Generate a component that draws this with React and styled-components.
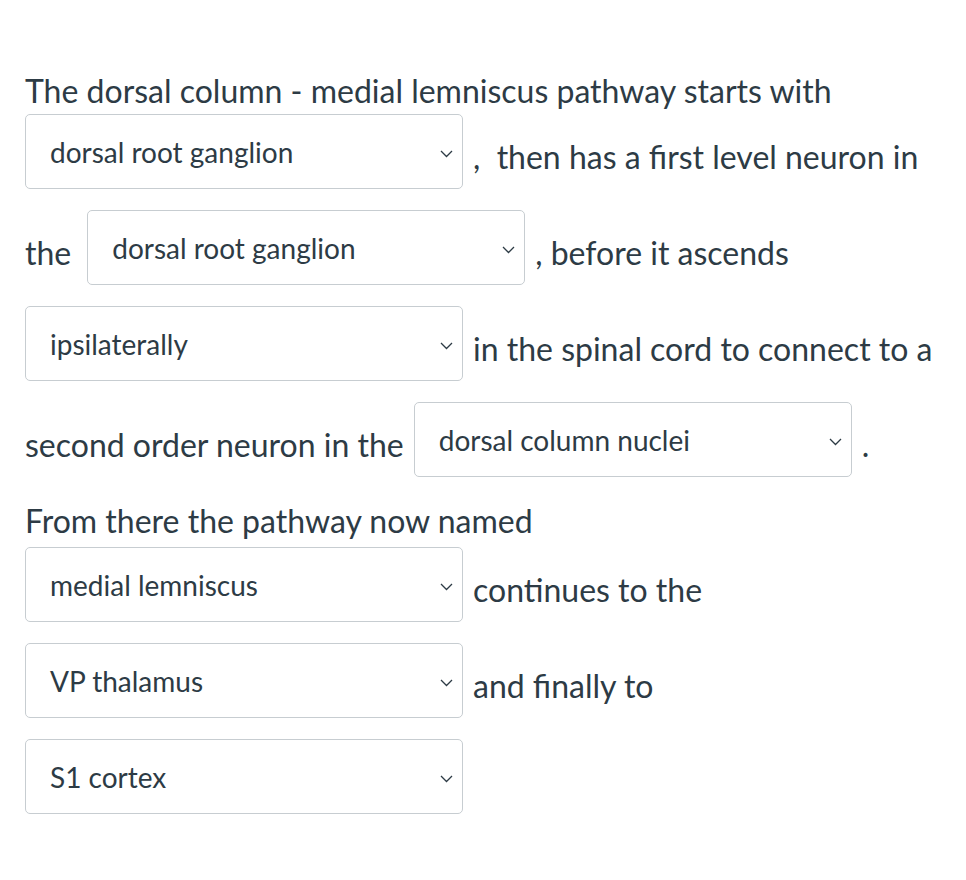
import React from 'react'
import styled, { createGlobalStyle } from 'styled-components'

const Global = createGlobalStyle`
  html, body {
    margin: 0;
    padding: 0;
    background: #fff;
  }
`

const Page = styled.div`
  padding: 73px 0 40px 25px;
  font-family: Lato, "Noto Sans", sans-serif;
  color: #2d3b45;
`

const Line = styled.div`
  display: flex;
  align-items: flex-end;
  gap: 10px;
  margin-top: ${p => p.$mt || 0}px;
`

const Words = styled.span`
  font-size: 32px;
  line-height: 36px;
  white-space: nowrap;
  padding-bottom: ${p => (p.$lift ? 14 : 0)}px;
  margin-right: ${p => (p.$before ? 6 : 0)}px;
`

const Box = styled.div`
  box-sizing: border-box;
  width: 438px;
  height: 75px;
  flex: none;
  display: flex;
  align-items: center;
  justify-content: space-between;
  padding: 0 9px 0 24px;
  border: 1px solid #c7cdd1;
  border-radius: 5px;
  background: #fff;
  font-size: 28px;
`

const Chevron = styled.svg`
  width: 13px;
  height: 8px;
  margin-top: 4px;
`

function Select({ value }) {
  return (
    <Box>
      <span>{value}</span>
      <Chevron viewBox="0 0 13 8" fill="none">
        <path d="M1 1l5.5 5.5 5.5-5.5" stroke="#2d3b45" strokeWidth="1.3" />
      </Chevron>
    </Box>
  )
}

export default function App() {
  return (
    <Page>
      <Global />
      <Line>
        <Words>The dorsal column - medial lemniscus pathway starts with</Words>
      </Line>
      <Line $mt={5}>
        <Select value="dorsal root ganglion" />
        <Words $lift>, &nbsp;then has a first level neuron in</Words>
      </Line>
      <Line $mt={21}>
        <Words $lift $before>the</Words>
        <Select value="dorsal root ganglion" />
        <Words $lift>, before it ascends</Words>
      </Line>
      <Line $mt={21}>
        <Select value="ipsilaterally" />
        <Words $lift>in the spinal cord to connect to a</Words>
      </Line>
      <Line $mt={21}>
        <Words $lift>second order neuron in the</Words>
        <Select value="dorsal column nuclei" />
        <Words $lift>.</Words>
      </Line>
      <Line $mt={26}>
        <Words>From there the pathway now named</Words>
      </Line>
      <Line $mt={8}>
        <Select value="medial lemniscus" />
        <Words $lift>continues to the</Words>
      </Line>
      <Line $mt={21}>
        <Select value="VP thalamus" />
        <Words $lift>and finally to</Words>
      </Line>
      <Line $mt={21}>
        <Select value="S1 cortex" />
      </Line>
    </Page>
  )
}
